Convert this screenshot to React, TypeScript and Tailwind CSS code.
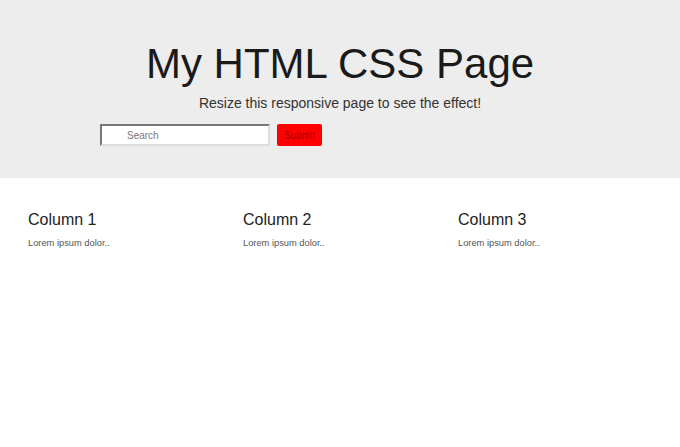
const columns = ["Column 1", "Column 2", "Column 3"];

export default function App() {
  return (
    <div className="w-[680px] h-[447px] bg-white font-['Liberation_Sans',Arial,sans-serif]">
      <header className="h-[178px] bg-[#ededed] flex flex-col items-center pt-[36px]">
        <h1 className="text-[42px] leading-[56px] text-[#1a1a1a]">My HTML CSS Page</h1>
        <p className="text-[14px] leading-[18px] mt-[2px] text-[#333]">
          Resize this responsive page to see the effect!
        </p>
        <form className="self-start ml-[100px] mt-[12px] flex gap-[7px]">
          <input
            type="text"
            placeholder="Search"
            className="w-[170px] h-[22px] bg-white border-2 border-t-[#777] border-l-[#777] border-r-[#ddd] border-b-[#ddd] pl-[25px] text-[10px] placeholder:text-[#777] outline-none"
          />
          <button
            type="button"
            className="w-[45px] h-[22px] bg-[#ff0000] rounded-[2px] text-[10px] text-[#a00000]"
          >
            Submit
          </button>
        </form>
      </header>
      <main className="grid grid-cols-[215px_215px_215px] pl-[28px] pt-[32px]">
        {columns.map((c) => (
          <div key={c}>
            <h2 className="text-[16px] leading-[20px] text-[#222]">{c}</h2>
            <p className="text-[9.3px] leading-[12px] mt-[7px] text-[#555]">Lorem ipsum dolor..</p>
          </div>
        ))}
      </main>
    </div>
  );
}
